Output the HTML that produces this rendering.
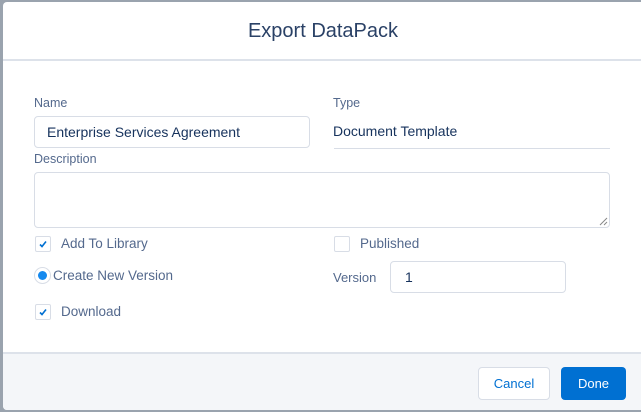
<!DOCTYPE html>
<html><head><style>
*{box-sizing:border-box;margin:0;padding:0}
body{width:641px;height:412px;background:#9aa3ae;font-family:"Liberation Sans",sans-serif;position:relative;overflow:hidden;color:#16325c}
.modal{position:absolute;left:3px;top:2px;width:640px;height:408px;background:#fff;border-radius:4px 0 0 4px;overflow:hidden}
.abs{position:absolute}
.lbl{font-size:12.5px;color:#54698d}
.txt{font-size:14px;color:#16325c}
.inp{border:1px solid #d8dde6;border-radius:4px;background:#fff}
.cb{width:16px;height:16px;border:1px solid #d8dde6;border-radius:2px;background:#fff}
.btn{border-radius:4px;font-size:13px;text-align:center;line-height:31px}
</style></head><body>
<div class="modal">
<div class="abs" style="left:0;top:0;width:640px;height:59px;border-bottom:2px solid #dde2ea;text-align:center;font-size:20px;line-height:58px;color:#2a4166">Export DataPack</div>
<div class="abs lbl" style="left:31px;top:94px">Name</div>
<div class="abs inp txt" style="left:31px;top:114px;width:276px;height:32px;padding-left:12px;line-height:30px">Enterprise Services Agreement</div>
<div class="abs lbl" style="left:330px;top:94px">Type</div>
<div class="abs txt" style="left:330px;top:121px">Document Template</div>
<div class="abs" style="left:331px;top:146px;width:276px;height:1px;background:#d8dde6"></div>
<div class="abs lbl" style="left:31px;top:150px">Description</div>
<div class="abs inp" style="left:31px;top:170px;width:576px;height:56px"></div>
<svg class="abs" style="left:596px;top:215px" width="9" height="9"><path d="M1 8L8 1M5 8L8 5" stroke="#888" stroke-width="1"/></svg>
<div class="abs cb" style="left:32px;top:234px"></div>
<svg class="abs" style="left:35px;top:237px" width="10" height="10"><path d="M2 5.5L4 7.5L8 2.5" stroke="#0070d2" stroke-width="1.6" fill="none"/></svg>
<div class="abs txt" style="left:58px;top:234px;color:#54698d;font-size:13.5px">Add To Library</div>
<div class="abs" style="left:31px;top:265px;width:17px;height:17px;border:1px solid #d8dde6;border-radius:50%;background:#fff"></div>
<div class="abs" style="left:35px;top:269px;width:9px;height:9px;border-radius:50%;background:#1589ee"></div>
<div class="abs txt" style="left:50px;top:266px;color:#54698d;font-size:13.5px">Create New Version</div>
<div class="abs cb" style="left:32px;top:302px"></div>
<svg class="abs" style="left:35px;top:305px" width="10" height="10"><path d="M2 5.5L4 7.5L8 2.5" stroke="#0070d2" stroke-width="1.6" fill="none"/></svg>
<div class="abs txt" style="left:58px;top:302px;color:#54698d;font-size:13.5px">Download</div>
<div class="abs cb" style="left:331px;top:234px"></div>
<div class="abs txt" style="left:357px;top:234px;color:#54698d;font-size:13.5px">Published</div>
<div class="abs lbl" style="left:330px;top:268px;font-size:13px">Version</div>
<div class="abs inp txt" style="left:387px;top:259px;width:176px;height:32px;padding-left:14px;line-height:30px">1</div>
<div class="abs" style="left:0;top:350px;width:640px;height:60px;background:#f4f6f9;border-top:2px solid #dde2ea"></div>
<div class="abs btn" style="left:475px;top:365px;width:72px;height:33px;border:1px solid #d8dde6;background:#fff;color:#0070d2">Cancel</div>
<div class="abs btn" style="left:558px;top:365px;width:65px;height:33px;background:#0070d2;color:#fff;line-height:33px">Done</div>
</div>
</body></html>
